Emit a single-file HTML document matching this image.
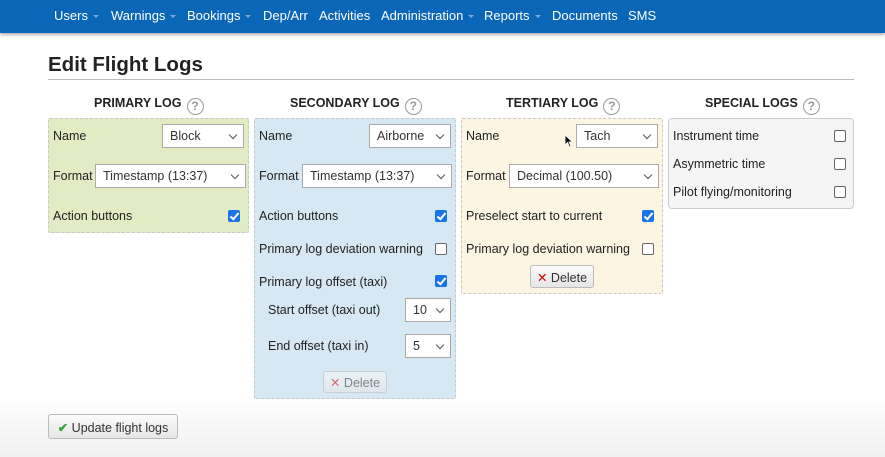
<!DOCTYPE html>
<html><head><style>
*{box-sizing:border-box;margin:0;padding:0}
body{width:885px;height:457px;overflow:hidden;font-family:"Liberation Sans",sans-serif;color:#222;font-size:12.5px;position:relative;background:linear-gradient(#fff 0,#fff 395px,#f0f0f0 457px)}
.nav{position:absolute;left:0;top:0;width:885px;height:33px;background:#0a66b7;box-shadow:0 2px 3px rgba(0,0,0,.3)}
.nav span{position:absolute;top:8px;color:#fff;font-size:13px}
.car{display:inline-block;margin-left:5px;border-left:3px solid transparent;border-right:3px solid transparent;border-top:3px solid #7fa8d4;vertical-align:middle}
.a{position:absolute;white-space:nowrap}
h1{position:absolute;left:48px;top:53px;font-size:20.5px;font-weight:bold;color:#222}
.hr{position:absolute;left:48px;top:79px;width:806px;height:1px;background:#bbb}
.hd{position:absolute;top:96px;font-weight:bold;font-size:12.5px;color:#222}
.q{display:inline-block;width:17px;height:17px;border:1.5px solid #999;border-radius:50%;color:#999;font-size:12px;text-align:center;line-height:14px;margin-left:5px;vertical-align:-3px;font-weight:bold}
.p{position:absolute;border:1px dashed #c8c8c8;border-radius:2px}
.sel{position:absolute;background:#fff;border:1px solid #aaa;height:24px;padding:4px 0 0 7px;font-size:12.5px;color:#333}
.sel:after{content:"";position:absolute;right:7px;top:7px;width:5px;height:5px;border-right:1px solid #555;border-bottom:1px solid #555;transform:rotate(45deg)}
.cb{position:absolute;width:12px;height:12px;border-radius:2px;border:1px solid #666;background:#fff}
.cb.on{background:#1a73e8;border-color:#1a73e8}
.cb.on:after{content:"";position:absolute;left:3px;top:0px;width:3px;height:7px;border-right:2px solid #fff;border-bottom:2px solid #fff;transform:rotate(40deg)}
.btn{position:absolute;border:1px solid #bbb;border-radius:3px;background:linear-gradient(#fbfbfb,#e6e6e6);font-size:12.5px;text-align:center;color:#333}
</style></head><body>
<div class="nav">
<span style="left:54px">Users<i class="car"></i></span>
<span style="left:111px">Warnings<i class="car"></i></span>
<span style="left:187px">Bookings<i class="car"></i></span>
<span style="left:263px">Dep/Arr</span>
<span style="left:319px">Activities</span>
<span style="left:381px">Administration<i class="car"></i></span>
<span style="left:484px">Reports<i class="car"></i></span>
<span style="left:552px">Documents</span>
<span style="left:628px">SMS</span>
</div>
<h1>Edit Flight Logs</h1>
<div class="hr"></div>
<div class="hd" style="left:94px">PRIMARY LOG<span class="q">?</span></div>
<div class="hd" style="left:290px">SECONDARY LOG<span class="q">?</span></div>
<div class="hd" style="left:506px">TERTIARY LOG<span class="q">?</span></div>
<div class="hd" style="left:705px">SPECIAL LOGS<span class="q">?</span></div>

<div class="p" style="left:48px;top:118px;width:201px;height:115px;background:#e3ebc4"></div>
<div class="a" style="left:53px;top:129px">Name</div>
<div class="sel" style="left:162px;top:124px;width:82px">Block</div>
<div class="a" style="left:53px;top:169px">Format</div>
<div class="sel" style="left:95px;top:164px;width:151px">Timestamp (13:37)</div>
<div class="a" style="left:53px;top:209px">Action buttons</div>
<div class="cb on" style="left:228px;top:210px"></div>

<div class="p" style="left:254px;top:118px;width:202px;height:281px;background:#d6e8f3"></div>
<div class="a" style="left:259px;top:129px">Name</div>
<div class="sel" style="left:369px;top:124px;width:82px">Airborne</div>
<div class="a" style="left:259px;top:169px">Format</div>
<div class="sel" style="left:302px;top:164px;width:150px">Timestamp (13:37)</div>
<div class="a" style="left:259px;top:209px">Action buttons</div>
<div class="cb on" style="left:435px;top:210px"></div>
<div class="a" style="left:259px;top:242px">Primary log deviation warning</div>
<div class="cb" style="left:435px;top:243px"></div>
<div class="a" style="left:259px;top:275px">Primary log offset (taxi)</div>
<div class="cb on" style="left:435px;top:275px"></div>
<div class="a" style="left:268px;top:303px">Start offset (taxi out)</div>
<div class="sel" style="left:405px;top:298px;width:46px">10</div>
<div class="a" style="left:268px;top:339px">End offset (taxi in)</div>
<div class="sel" style="left:405px;top:334px;width:46px">5</div>
<div class="btn" style="left:323px;top:371px;width:64px;height:22px;padding-top:3px;opacity:.55"><span style="color:#c00">✕</span> Delete</div>

<div class="p" style="left:461px;top:118px;width:202px;height:176px;background:#fbf5e1"></div>
<div class="a" style="left:466px;top:129px">Name</div>
<div class="sel" style="left:576px;top:124px;width:82px">Tach</div>
<div class="a" style="left:466px;top:169px">Format</div>
<div class="sel" style="left:509px;top:164px;width:150px">Decimal (100.50)</div>
<div class="a" style="left:466px;top:209px">Preselect start to current</div>
<div class="cb on" style="left:642px;top:210px"></div>
<div class="a" style="left:466px;top:242px">Primary log deviation warning</div>
<div class="cb" style="left:642px;top:243px"></div>
<div class="btn" style="left:530px;top:265px;width:64px;height:23px;padding-top:4px"><span style="color:#c00">✕</span> Delete</div>
<svg class="a" style="left:564px;top:134px" width="10" height="14" viewBox="0 0 10 14"><path d="M1 1 L1 11 L3.5 8.5 L5.5 13 L7 12.3 L5 8 L8.5 8 Z" fill="#111" stroke="#fff" stroke-width=".8"/></svg>

<div class="p" style="left:668px;top:118px;width:186px;height:91px;background:#f5f5f5;border:1px solid #ccc;border-radius:4px"></div>
<div class="a" style="left:673px;top:129px">Instrument time</div>
<div class="cb" style="left:834px;top:130px"></div>
<div class="a" style="left:673px;top:157px">Asymmetric time</div>
<div class="cb" style="left:834px;top:158px"></div>
<div class="a" style="left:673px;top:185px">Pilot flying/monitoring</div>
<div class="cb" style="left:834px;top:186px"></div>

<div class="btn" style="left:48px;top:414px;width:130px;height:25px;padding-top:5px;font-size:12.5px"><span style="color:#3aa53a;font-weight:bold">✔</span> Update flight logs</div>
</body></html>
